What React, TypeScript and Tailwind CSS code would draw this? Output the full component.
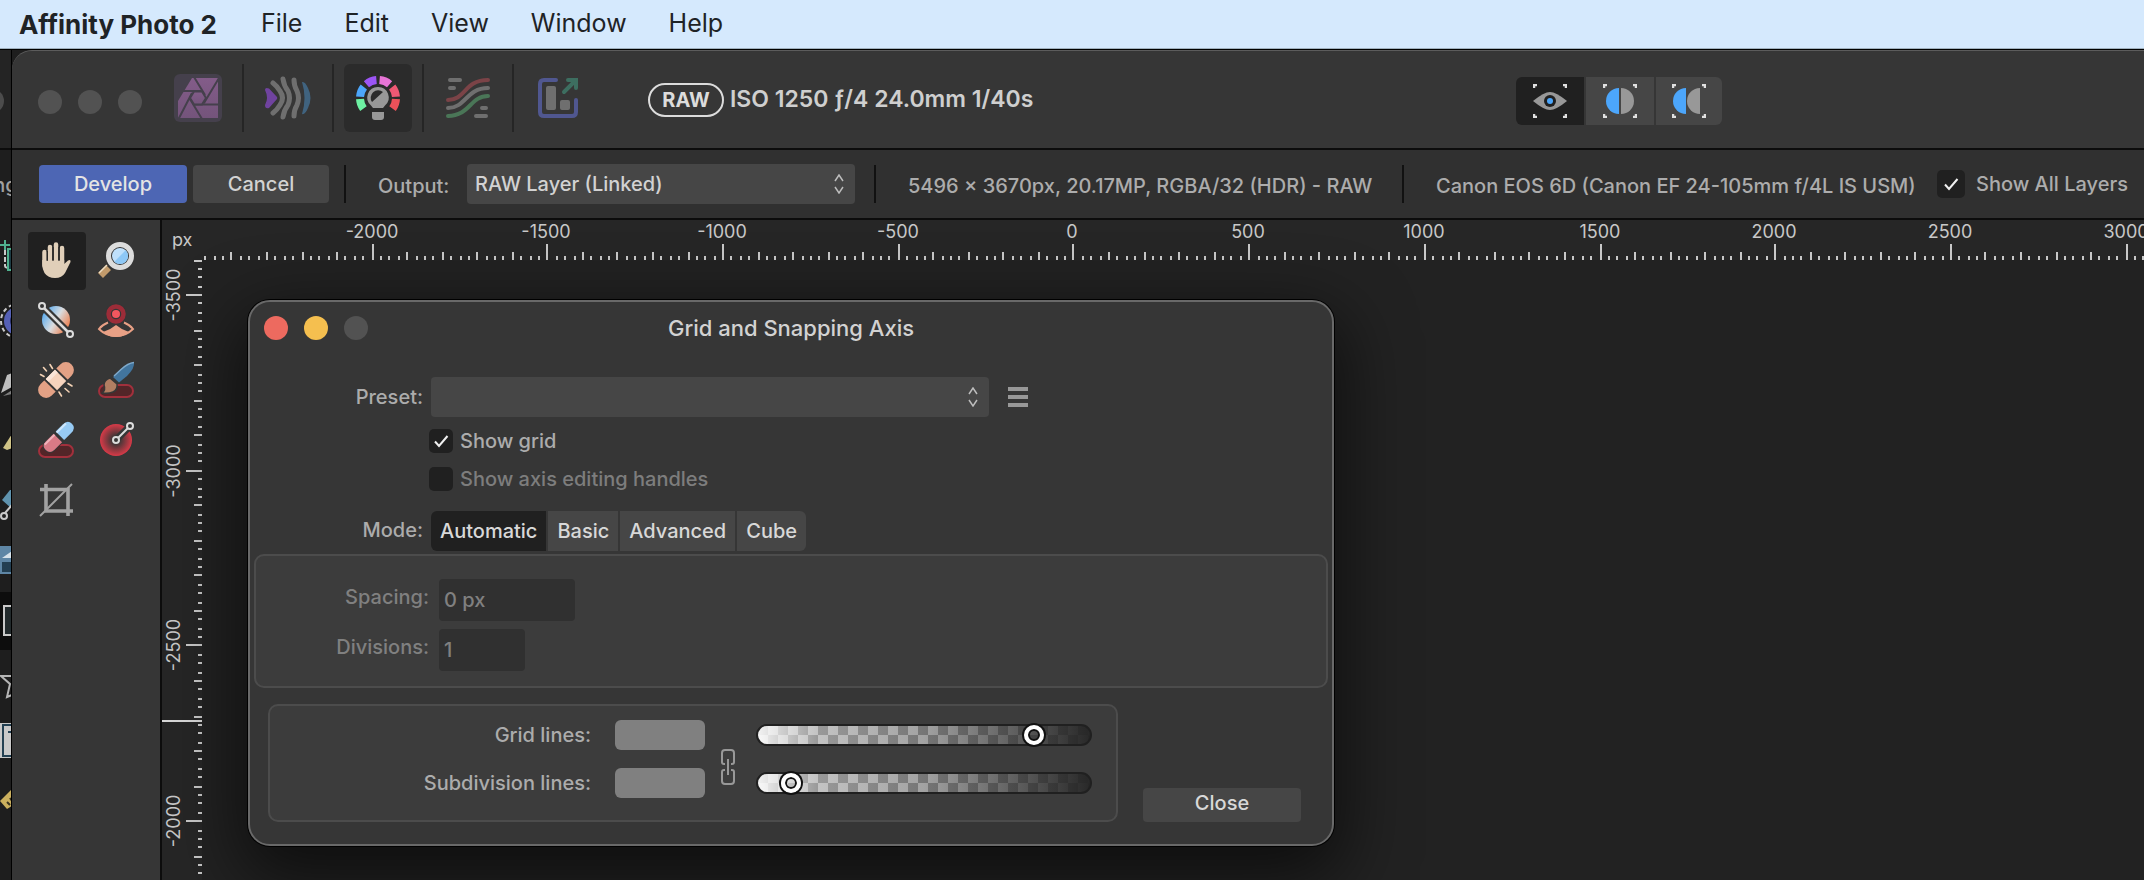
import { useState, type ReactNode } from "react";
import { clsx } from "clsx";

const menus = ["File", "Edit", "View", "Window", "Help"];
const modes = ["Automatic", "Basic", "Advanced", "Cube"];

/* ---------- title bar icons ---------- */

function PhotoIcon() {
  return (
    <svg width="48" height="48" viewBox="0 0 48 48">
      <defs>
        <linearGradient id="photo" x1="0" y1="0" x2="0" y2="1">
          <stop offset="0" stopColor="#835c89" />
          <stop offset="1" stopColor="#74547b" />
        </linearGradient>
      </defs>
      <rect width="48" height="48" rx="6" fill="#45404c" />
      <path d="M18 4H44V44H4V27Z" fill="url(#photo)" />
      <path
        d="M20 3 31 21M9 17H27M45 4 30 29M45 30.500H21M28 45 16 25M4 46 18 19"
        stroke="#45404c"
        strokeWidth="2"
      />
      <path
        d="M20 17.500H28L32 24 28 30.500H20L16 24Z"
        fill="url(#photo)"
        stroke="#45404c"
        strokeWidth="2"
      />
    </svg>
  );
}

function LiquifyIcon() {
  return (
    <svg width="46" height="44" viewBox="0 0 46 44" fill="none">
      <path d="M0 14Q0 11 4 12.500L12 21Q12.500 22 12 23L4 32Q0 33 0 29Q4 22 0 14Z" fill="#70439f" />
      <g stroke="#6f6f6f" strokeWidth="5" strokeLinecap="round">
        <path d="M8 7Q12 10 15 15Q20 22 15 29Q12 34 8 37" />
        <path d="M18 3Q19 10 23 15Q26 22 23 29Q19 34 18 41" />
        <path d="M29 4Q29 10 32 15Q35 22 32 29Q29 34 29 40" />
      </g>
      <path d="M37 6Q40 5 43 12Q48 22 43 32Q40 39 37 38Q42 22 37 6Z" fill="#40637f" />
    </svg>
  );
}

const wheel = [
  { from: -126, to: -93, color: "#6df0a2" },
  { from: -86, to: -52, color: "#4ca6fb" },
  { from: -40, to: -5, color: "#9c55f5" },
  { from: 5, to: 40, color: "#e774d6" },
  { from: 52, to: 86, color: "#ef5874" },
  { from: 93, to: 126, color: "#ec5159" },
];

function arc(from: number, to: number) {
  const p = (deg: number) => {
    const a = ((deg - 90) * Math.PI) / 180;
    return `${22 + 18 * Math.cos(a)} ${22 + 18 * Math.sin(a)}`;
  };
  return `M${p(from)}A18 18 0 0 1 ${p(to)}`;
}

function DevelopIcon() {
  return (
    <svg width="44" height="44" viewBox="0 0 44 44" fill="none">
      {wheel.map((s) => (
        <path key={s.color} d={arc(s.from, s.to)} stroke={s.color} strokeWidth="8" />
      ))}
      <path d="M22 11a10.500 10.500 0 0 0-7 18.500L17 32H27L29 29.500A10.500 10.500 0 0 0 22 11Z" fill="#989898" />
      <path d="M16 26A7.500 7.500 0 0 1 27 16Z" fill="#2b2b2b" />
      <path d="M16 36H28V41Q28 44 25 44H19Q16 44 16 41Z" fill="#989898" />
    </svg>
  );
}

function ToneIcon() {
  return (
    <svg width="44" height="40" viewBox="0 0 44 40" fill="none" strokeWidth="4" strokeLinecap="round">
      <path d="M4 2H14M4 10H8M36 30H40M30 38H40" stroke="#6f6f6f" />
      <path d="M2 22C20 22 18 2 42 2" stroke="#7b4347" />
      <path d="M2 30C20 30 20 10 42 10" stroke="#6f6f6f" />
      <path d="M2 38C24 38 24 18 42 18" stroke="#4a7657" />
    </svg>
  );
}

function ExportIcon() {
  return (
    <svg width="40" height="40" viewBox="0 0 40 40" fill="none" strokeWidth="4" strokeLinecap="round">
      <path d="M18 2H6Q2 2 2 6V34Q2 38 6 38H34Q38 38 38 34V22" stroke="#505790" />
      <rect x="8" y="8" width="10" height="24" rx="2" fill="#6f6f6f" />
      <rect x="22" y="22" width="10" height="10" rx="2" fill="#6f6f6f" />
      <path d="M26 14 37 3M30 2H38V10" stroke="#3d6e60" />
    </svg>
  );
}

function ViewFrame({ children }: { children: ReactNode }) {
  return (
    <svg width="34" height="34" viewBox="0 0 34 34" fill="none">
      <path
        d="M1 4V1H4M30 1H33V4M33 30V33H30M4 33H1V30"
        stroke="#e0e0e0"
        strokeWidth="2.500"
      />
      {children}
    </svg>
  );
}

const views = [
  {
    label: "No split",
    icon: (
      <>
        <path d="M0 17Q11 8 17 8T34 17Q23 26 17 26T0 17Z" fill="#989898" />
        <circle cx="17" cy="17" r="6" fill="#202020" />
        <circle cx="17" cy="17" r="3" fill="#4ca6fb" />
      </>
    ),
  },
  {
    label: "Split view",
    icon: (
      <>
        <path d="M16 4V30A13 13 0 0 1 16 4Z" fill="#4ca6fb" />
        <path d="M18 4V30A13 13 0 0 0 18 4Z" fill="#989898" />
      </>
    ),
  },
  {
    label: "Mirror view",
    icon: (
      <>
        <path d="M14 4V30A13 13 0 0 1 14 4Z" fill="#4ca6fb" />
        <path d="M28 4V30A13 13 0 0 1 28 4Z" fill="#989898" />
      </>
    ),
  },
];

/* ---------- tool icons ---------- */

const tools = [
  {
    label: "View Tool",
    icon: (
      <>
        <g stroke="#e0cfb9" strokeWidth="4.500" strokeLinecap="round">
          <path d="M6.500 10V24M12 5V22M18 2.500V22M24 6V22" />
        </g>
        <path d="M4.300 18H26.200V22L30 18.500Q33 17 32.500 20L27 31Q24 36 17 36Q10 36 6.500 31Q4.300 27 4.300 22Z" fill="#e0cfb9" />
        <path d="M9.200 9V19M15 5V19M21 5V19" stroke="#202020" strokeWidth="1.200" />
      </>
    ),
  },
  {
    label: "Zoom Tool",
    icon: (
      <>
        <path d="M2.500 33.500 10.500 25.500" stroke="#c19a6b" strokeWidth="7" />
        <path d="M1 31 9 23" stroke="#ecdcc2" strokeWidth="1.500" />
        <circle cx="22" cy="14" r="11.500" fill="#363636" stroke="#dcdcdc" strokeWidth="5" />
        <circle cx="22" cy="14" r="8" fill="#bfe0fb" />
        <path d="M27.700 8.300A8 8 0 0 1 16.300 19.700Z" fill="#8ec8f6" />
      </>
    ),
  },
  {
    label: "White Balance Tool",
    icon: (
      <>
        <circle cx="18" cy="18" r="14" fill="url(#balance)" />
        <path d="M4 4 32 32" stroke="#363636" strokeWidth="7" />
        <path d="M6 6 30 30" stroke="#dcdcdc" strokeWidth="2.500" />
        <circle cx="4" cy="4" r="3" fill="#363636" stroke="#dcdcdc" strokeWidth="2" />
        <circle cx="32" cy="32" r="3" fill="#363636" stroke="#dcdcdc" strokeWidth="2" />
      </>
    ),
  },
  {
    label: "Red Eye Removal Tool",
    icon: (
      <>
        <path d="M10 20.500Q4 23 1 27Q8 34 18 34T35 27Q32 23 26 20.500" stroke="#e8a085" strokeWidth="2" />
        <path d="M5 30Q12 28 18 23Q24 28 31 30Q26 35 18 35T5 30Z" fill="#e8a085" />
        <circle cx="18" cy="12" r="10.500" fill="#363636" />
        <circle cx="18" cy="12" r="7.500" fill="#363636" stroke="#9c2c38" strokeWidth="4.500" />
        <circle cx="18" cy="12" r="4" fill="#f4575f" />
      </>
    ),
  },
  {
    label: "Blemish Removal Tool",
    icon: (
      <>
        <g transform="rotate(-45 18 18)">
          <rect x="-4" y="10" width="44" height="16" rx="8" fill="#e3a185" />
          <rect x="9.500" y="9" width="17" height="18" fill="#363636" />
          <rect x="11.500" y="10" width="13" height="16" fill="#f6d3bd" />
          <path d="M11.500 10H24.500V14H11.500Z" fill="#fae5d8" />
        </g>
        <path
          d="M12 2.500 14.500 6.500M5.500 5.500 8.500 9M2.500 12.500 6 14.500M30 21.500 34 24M27 26.500 31 30M21 30 23.500 34"
          stroke="#f3d2b5"
          strokeWidth="1.600"
          strokeLinecap="round"
        />
      </>
    ),
  },
  {
    label: "Overlay Paint Tool",
    icon: (
      <>
        <rect x="1" y="23" width="34" height="12" rx="6" fill="#532528" stroke="#a2303c" strokeWidth="2" />
        <path d="M4 31Q8 28 6 23Q6 18 12 16L19 22Q20 28 15 30Q10 32 4 31Z" fill="#b17e62" stroke="#363636" strokeWidth="1.500" />
        <path d="M36 0Q37 6 29 14L21 20.500 15 15 22 8Q30 1 36 0Z" fill="#42759e" />
        <path d="M16 14 23 7.500Q30 1 36 .500" stroke="#7fa9cb" strokeWidth="1.500" />
      </>
    ),
  },
  {
    label: "Overlay Erase Tool",
    icon: (
      <>
        <rect x="1" y="23" width="34" height="12" rx="6" fill="#532528" stroke="#a2303c" strokeWidth="2" />
        <g transform="rotate(-45 20.500 14.500)">
          <rect x="1" y="8" width="39" height="14" rx="6" fill="#363636" />
          <path d="M19 9H8Q2 9 2 15T8 21H19Z" fill="#d97a86" />
          <path d="M22 9H32Q39 9 39 15T32 21H22Z" fill="#97cbf5" />
          <path d="M5 10.500H19" stroke="#efb3bb" strokeWidth="2" />
          <path d="M22 10.500H35" stroke="#cfe7fb" strokeWidth="2" />
        </g>
      </>
    ),
  },
  {
    label: "Overlay Gradient Tool",
    icon: (
      <>
        <circle cx="18" cy="18" r="16" fill="url(#radial)" />
        <path d="M18 18 32 4" stroke="#363636" strokeWidth="7" />
        <path d="M20 16 30 6" stroke="#dcdcdc" strokeWidth="2" />
        <circle cx="18" cy="18" r="3" fill="#363636" stroke="#dcdcdc" strokeWidth="2" />
        <circle cx="32" cy="4" r="3" fill="#363636" stroke="#dcdcdc" strokeWidth="2" />
      </>
    ),
  },
  {
    label: "Crop Tool",
    icon: (
      <>
        <path d="M2 7.500H30V34M8 2V29H35" stroke="#a2a2a2" strokeWidth="3.600" />
        <path d="M2 34 34 2" stroke="#a2a2a2" strokeWidth="2" />
      </>
    ),
  },
];

/* ---------- slivers of the window behind ---------- */

const backIcons = [
  <>
    <path d="M0 13H10M5 8V18" stroke="#4fb28f" strokeWidth="2" />
    <path d="M5 18V34Q5 36 10 36" stroke="#c9c9c9" strokeWidth="2" strokeDasharray="5 2" />
    <path d="M12 17H8V38H12" stroke="#4fb28f" strokeWidth="2" fill="#1d3c44" />
  </>,
  <>
    <circle cx="18" cy="29" r="14" fill="#5560b5" />
    <circle cx="18" cy="29" r="8" fill="#2a2f66" />
    <circle cx="18" cy="29" r="17" stroke="#c9c9c9" strokeWidth="2" strokeDasharray="4 3" />
  </>,
  <>
    <path d="M12 21 7 23 1 41 12 35Z" fill="#bdbdbd" />
    <path d="M3 44 12 38V42Z" fill="#7d7d7d" />
  </>,
  <path d="M12 22 3 36 7 38 12 36Z" fill="#cfc386" />,
  <>
    <path d="M2 28 10 18H12V37Z" fill="#5f93ae" />
    <path d="M5 41 12 33" stroke="#c9c9c9" strokeWidth="2" />
    <circle cx="4" cy="44" r="3" stroke="#c9c9c9" strokeWidth="2" />
  </>,
  <>
    <rect y="14" width="12" height="28" fill="#5e86a5" />
    <path d="M2 26 12 19V26Z" fill="#d7e2ea" />
    <path d="M2 30H12V40H2Z" fill="#233f52" />
  </>,
  <path d="M12 14H4V43H12" stroke="#c9c9c9" strokeWidth="2" fill="#222a2c" />,
  <path d="M12 24H1L10 32 7 45 12 43" stroke="#b5b5b5" strokeWidth="2" />,
  <>
    <path d="M12 11H0V46H12Z" fill="#c9c9c9" />
    <path d="M12 13H3V44H12M8 20H12" stroke="#234052" strokeWidth="2" />
  </>,
  <>
    <path d="M12 17 0 29 7 37 12 34Z" fill="#cbb05e" />
    <path d="M7 30 10 33M10 26 12 29" stroke="#3a3420" strokeWidth="2" />
  </>,
];

/* ---------- rulers ---------- */

const UNIT = 175.4; // screen pixels for 500 document pixels

function Ruler({ vertical, origin }: { vertical?: boolean; origin: number }) {
  const ticks = [];
  const labels = [];
  for (let i = -180; i <= 180; i++) {
    const at = Math.round((origin + (i * UNIT) / 20) / 2) * 2;
    if (at < (vertical ? 40 : 42)) continue;
    const len = i % 20 === 0 ? 16 : i % 4 === 0 ? 8 : 4;
    ticks.push(
      vertical ? (
        <rect key={i} x={40 - len} y={at} width={len} height="2" />
      ) : (
        <rect key={i} x={at} y={40 - len} width="2" height={len} />
      ),
    );
    if (i % 20 === 0) {
      const value = (i / 20) * 500;
      labels.push(
        vertical ? (
          <text key={i} transform={`translate(18 ${at + 1}) rotate(-90)`}>
            {value}
          </text>
        ) : (
          <text key={i} x={at} y="18">
            {value}
          </text>
        ),
      );
    }
  }
  return (
    <svg className="absolute inset-0 h-full w-full" fill="#c8c8c8">
      <g shapeRendering="crispEdges">{ticks}</g>
      <g fontSize="18" textAnchor="middle">
        {labels}
      </g>
    </svg>
  );
}

/* ---------- controls ---------- */

function Chevrons() {
  return (
    <svg
      className="pointer-events-none absolute top-2.5 right-[11px] h-5 w-2.5"
      viewBox="0 0 10 20"
      fill="none"
      stroke="#bdbdbd"
      strokeWidth="1.500"
    >
      <path d="M1 7 5 1 9 7M1 13 5 19 9 13" />
    </svg>
  );
}

type CheckProps = { label: string; checked?: boolean; disabled?: boolean; large?: boolean };

function Check({ label, checked, disabled, large }: CheckProps) {
  return (
    <label
      className={clsx("flex w-fit items-center", large ? "gap-[11px]" : "gap-[7px]", disabled && "text-[#7d7d7d]")}
    >
      <span className="relative">
        <input
          type="checkbox"
          defaultChecked={checked}
          disabled={disabled}
          className={clsx("peer block appearance-none rounded-[5px] bg-[#202020]", large ? "size-7" : "size-6")}
        />
        <svg
          className="pointer-events-none absolute inset-0 m-auto hidden size-6 peer-checked:block"
          viewBox="0 0 24 24"
          fill="none"
          stroke="#f0f0f0"
          strokeWidth="2"
        >
          <path d="M6 12.500 10 17 18.500 7" />
        </svg>
      </span>
      {label}
    </label>
  );
}

function OpacitySlider({ label, value }: { label: string; value: number }) {
  return (
    <input
      type="range"
      aria-label={label}
      min={0}
      max={1000}
      defaultValue={value}
      className="h-[22px] w-full appearance-none rounded-full border-2 border-[#202020] bg-[linear-gradient(to_right,rgb(255_255_255/0.9),rgb(255_255_255/0.2)_18%,rgb(60_60_60/0.15)_50%,rgb(36_36_36/0.97)),repeating-conic-gradient(#b4b4b4_0_25%,#808080_0_50%)] bg-[length:100%_100%,20px_18px] [&::-webkit-slider-thumb]:size-5 [&::-webkit-slider-thumb]:appearance-none [&::-webkit-slider-thumb]:rounded-full [&::-webkit-slider-thumb]:border-4 [&::-webkit-slider-thumb]:border-white [&::-webkit-slider-thumb]:shadow-[0_0_0_2px_#111,inset_0_0_0_2px_#111]"
    />
  );
}

function Divider() {
  return <div className="h-[38px] w-0.5 shrink-0 bg-[#111]" />;
}

/* ---------- dialog ---------- */

function GridDialog() {
  const [mode, setMode] = useState("Automatic");

  return (
    <section
      role="dialog"
      aria-labelledby="grid-title"
      className="absolute top-20 left-[86px] w-[1086px] rounded-[22px] border-2 border-[#696969] bg-[#363636] shadow-[0_0_0_1px_#000,0_24px_70px_8px_rgb(0_0_0/0.6)]"
    >
      <header className="grid h-[52px] grid-cols-[1fr_auto_1fr] items-center px-3.5">
        <div className="flex gap-4">
          <button aria-label="Close window" className="size-6 rounded-full bg-[#ed6a5f]" />
          <button aria-label="Minimise window" className="size-6 rounded-full bg-[#f5bf4f]" />
          <button aria-label="Zoom window" className="size-6 rounded-full bg-[#525252]" />
        </div>
        <h2 id="grid-title" className="text-[22px] font-medium text-[#d2d2d2]">
          Grid and Snapping Axis
        </h2>
      </header>

      <div className="mt-[23px] flex items-center">
        <label htmlFor="preset" className="w-[173px] text-right">
          Preset:
        </label>
        <div className="relative ml-2 w-[558px]">
          <select id="preset" className="block h-10 w-full appearance-none rounded bg-[#464646] px-2" />
          <Chevrons />
        </div>
        <button aria-label="Preset options" className="ml-[19px] flex w-5 flex-col gap-1">
          <span className="h-1 bg-[#989898]" />
          <span className="h-1 bg-[#989898]" />
          <span className="h-1 bg-[#989898]" />
        </button>
      </div>

      <div className="mt-3 ml-[179px] flex flex-col gap-3.5 leading-6">
        <Check label="Show grid" checked />
        <Check label="Show axis editing handles" disabled />
      </div>

      <div className="mt-5 flex items-center">
        <span className="w-[173px] pb-0.5 text-right">Mode:</span>
        <div className="ml-2 flex gap-0.5 overflow-hidden rounded-md text-[#d8d8d8]">
          {modes.map((m) => (
            <button
              key={m}
              type="button"
              aria-pressed={m === mode}
              onClick={() => setMode(m)}
              className={clsx("h-10 px-[9px]", m === mode ? "bg-[#202020]" : "bg-[#464646]")}
            >
              {m}
            </button>
          ))}
        </div>
      </div>

      <div className="mx-1 mt-[3px] flex flex-col gap-2 rounded-[10px] border-2 border-[#4c4c4c] bg-[#3c3c3c] pt-[23px] pb-[15px] text-[#808080]">
        <div className="flex items-center gap-2.5">
          <label htmlFor="spacing" className="w-[173px] pb-1.5 text-right">
            Spacing:
          </label>
          <input
            id="spacing"
            disabled
            defaultValue="0 px"
            className="h-[42px] w-[136px] rounded bg-[#303030] px-[5px]"
          />
        </div>
        <div className="flex items-center gap-2.5">
          <label htmlFor="divisions" className="w-[173px] pb-1.5 text-right">
            Divisions:
          </label>
          <input
            id="divisions"
            disabled
            defaultValue="1"
            className="h-[42px] w-[86px] rounded bg-[#303030] px-[5px]"
          />
        </div>
      </div>

      <div className="mt-4 flex items-end gap-[25px] pr-[31px] pb-[22px] pl-[18px]">
        <div className="flex grow items-center rounded-[10px] border-2 border-[#4c4c4c] bg-[#3c3c3c] pt-3.5 pr-6 pb-[22px]">
          <div className="mr-4 grid w-[435px] shrink-0 grid-cols-[1fr_90px] items-center gap-x-6 gap-y-[18px] text-right leading-[30px]">
            <span>Grid lines:</span>
            <button aria-label="Grid line colour" className="h-[30px] rounded-md bg-[#808080]" />
            <span>Subdivision lines:</span>
            <button aria-label="Subdivision line colour" className="h-[30px] rounded-md bg-[#808080]" />
          </div>
          <button aria-label="Link colours" className="mr-[21px] pt-4">
            <svg width="14" height="36" viewBox="0 0 14 36" fill="none" stroke="#989898" strokeWidth="2">
              <path d="M4 15H3Q1 15 1 13V4Q1 1 4 1H10Q13 1 13 4V13Q13 15 11 15H10M4 21H3Q1 21 1 23V32Q1 35 4 35H10Q13 35 13 32V23Q13 21 11 21H10M7 10V26" />
            </svg>
          </button>
          <div className="flex grow flex-col gap-[26px]">
            <OpacitySlider label="Grid line opacity" value={853} />
            <OpacitySlider label="Subdivision line opacity" value={75} />
          </div>
        </div>
        <button type="button" className="h-[34px] w-[158px] rounded bg-[#464646] pb-1 text-[#d8d8d8]">
          Close
        </button>
      </div>
    </section>
  );
}

/* ---------- app ---------- */

export default function App() {
  return (
    <div className="flex min-h-screen flex-col overflow-hidden bg-[#1e1e1e] font-['Inter',sans-serif] text-[20px] font-medium text-[#acacac]">
      <svg className="absolute size-0" aria-hidden="true">
        <defs>
          <linearGradient id="balance" x1="0" y1="0.2" x2="1" y2="0.8">
            <stop offset="0" stopColor="#4ca6f0" />
            <stop offset="0.500" stopColor="#d9dcdf" />
            <stop offset="1" stopColor="#f0743c" />
          </linearGradient>
          <radialGradient id="radial">
            <stop offset="0.200" stopColor="#363636" />
            <stop offset="1" stopColor="#d93a48" />
          </radialGradient>
        </defs>
      </svg>

      <nav className="flex h-[49px] items-center gap-[42px] border-b border-[#9fb0be] bg-[#d5e9fd] pl-[19px] text-[25px] font-normal text-[#1f2326]">
        <a href="#app" className="mr-0.5 text-[26px] font-bold">
          Affinity Photo 2
        </a>
        {menus.map((m) => (
          <a key={m} href={`#${m}`}>
            {m}
          </a>
        ))}
      </nav>

      <div className="flex grow border-t border-black">
        <aside className="w-3 shrink-0 overflow-hidden border-r border-black bg-[#1e1e1e]">
          <div className="flex h-[100px] items-center border-b-2 border-[#0c0c0c] bg-[#242424] pt-1">
            <div className="-ml-5 size-6 shrink-0 rounded-full bg-[#4c4c4c]" />
          </div>
          <div className="flex h-[82px] justify-center pt-5 text-[#a0a0a0]">
            <span>ng</span>
          </div>
          <div className="flex flex-col gap-0.5">
            {backIcons.map((icon, i) => (
              <svg
                key={i}
                className={clsx("h-[58px] w-3", i === 6 && "bg-[#0d0d0d]")}
                viewBox="0 0 12 58"
                fill="none"
              >
                {icon}
              </svg>
            ))}
          </div>
        </aside>

        <div className="flex min-w-0 grow flex-col overflow-hidden rounded-tl-[20px] border-t border-[#5c5c5c] bg-[#363636]">
          {/* title bar */}
          <header className="flex h-[99px] shrink-0 items-center border-b-2 border-[#0c0c0c] pl-[26px]">
            <div className="flex gap-4 pt-1">
              <button aria-label="Close" className="size-6 rounded-full bg-[#525252]" />
              <button aria-label="Minimise" className="size-6 rounded-full bg-[#525252]" />
              <button aria-label="Zoom" className="size-6 rounded-full bg-[#525252]" />
            </div>
            <div className="ml-[22px] flex gap-2.5 pb-[3px]">
              <button aria-label="Photo Persona" className="grid size-[68px] place-items-center">
                <PhotoIcon />
              </button>
              <div className="w-0.5 bg-[#252525]" />
              <button aria-label="Liquify Persona" className="grid size-[68px] place-items-center">
                <LiquifyIcon />
              </button>
              <div className="w-0.5 bg-[#252525]" />
              <button
                aria-label="Develop Persona"
                aria-pressed
                className="grid size-[68px] place-items-center rounded-md bg-[#2b2b2b]"
              >
                <DevelopIcon />
              </button>
              <div className="w-0.5 bg-[#252525]" />
              <button aria-label="Tone Mapping Persona" className="grid size-[68px] place-items-center">
                <ToneIcon />
              </button>
              <div className="w-0.5 bg-[#252525]" />
              <button aria-label="Export Persona" className="grid size-[68px] place-items-center">
                <ExportIcon />
              </button>
            </div>
            <div className="ml-14 flex w-[868px] items-center gap-1.5 text-[23px] font-semibold text-[#cfcfcf]">
              <span className="grid h-[34px] w-[76px] place-items-center rounded-full border-2 border-[#dcdcdc] text-[20px] font-bold text-[#dcdcdc]">
                RAW
              </span>
              ISO 1250 ƒ/4 24.0mm 1/40s
            </div>
            <div className="mt-0.5 flex gap-0.5 overflow-hidden rounded-md">
              {views.map((v, i) => (
                <button
                  key={v.label}
                  aria-label={v.label}
                  className={clsx(
                    "grid h-12 w-[68px] place-items-center last:w-[66px]",
                    i === 0 ? "bg-[#202020]" : "bg-[#464646]",
                  )}
                >
                  <ViewFrame>{v.icon}</ViewFrame>
                </button>
              ))}
            </div>
          </header>

          {/* context toolbar */}
          <div className="flex h-[70px] shrink-0 items-center border-b-2 border-[#0c0c0c] bg-[#303030] pl-[27px] whitespace-nowrap">
            <button className="h-[38px] w-[148px] shrink-0 rounded bg-[#4d66b4] text-[#e4e4e4]">Develop</button>
            <button className="mr-[15px] ml-1.5 h-[38px] w-[136px] shrink-0 rounded bg-[#464646] text-[#d2d2d2]">
              Cancel
            </button>
            <Divider />
            <label htmlFor="output" className="ml-8 w-[89px] shrink-0 pt-1">
              Output:
            </label>
            <div className="relative mr-[19px] w-[388px] shrink-0">
              <select
                id="output"
                className="block h-10 w-full appearance-none rounded bg-[#464646] px-2 text-[#d2d2d2]"
              >
                <option>RAW Layer (Linked)</option>
              </select>
              <Chevrons />
            </div>
            <Divider />
            <span className="ml-8 w-[494px] shrink-0 pt-1">5496 × 3670px, 20.17MP, RGBA/32 (HDR) - RAW</span>
            <Divider />
            <span className="ml-8 w-[501px] shrink-0 pt-1">Canon EOS 6D (Canon EF 24-105mm f/4L IS USM)</span>
            <Check label="Show All Layers" checked large />
          </div>

          <div className="flex grow">
            <aside className="w-[150px] shrink-0 border-r-2 border-[#0c0c0c] pt-3 pl-4">
              <div className="grid w-fit grid-cols-2 gap-0.5">
                {tools.map((t, i) => (
                  <button
                    key={t.label}
                    aria-label={t.label}
                    className={clsx(
                      "grid size-[58px] place-items-center pr-0.5 pb-0.5",
                      i === 0 && "rounded bg-[#202020]",
                    )}
                  >
                    <svg width="36" height="36" viewBox="0 0 36 36" fill="none" className="overflow-visible">
                      {t.icon}
                    </svg>
                  </button>
                ))}
              </div>
            </aside>

            <main className="relative grid grow grid-cols-[40px_1fr] grid-rows-[40px_1fr] overflow-hidden bg-[#222222]">
              <div className="relative col-span-2 overflow-hidden bg-[#262626] font-normal">
                <Ruler origin={910.9} />
                <span className="absolute top-1.5 left-2.5 text-[18px] text-[#c8c8c8]">px</span>
              </div>
              <div className="relative bg-[#262626] font-normal">
                {/* extends up under the corner so both rulers share an origin */}
                <div className="absolute inset-x-0 -top-10 bottom-0">
                  <Ruler vertical origin={1301.9} />
                </div>
                {/* cursor position */}
                <div className="absolute top-[460px] h-0.5 w-10 bg-[#d8d8d8]" />
              </div>
              <GridDialog />
            </main>
          </div>
        </div>
      </div>
    </div>
  );
}
